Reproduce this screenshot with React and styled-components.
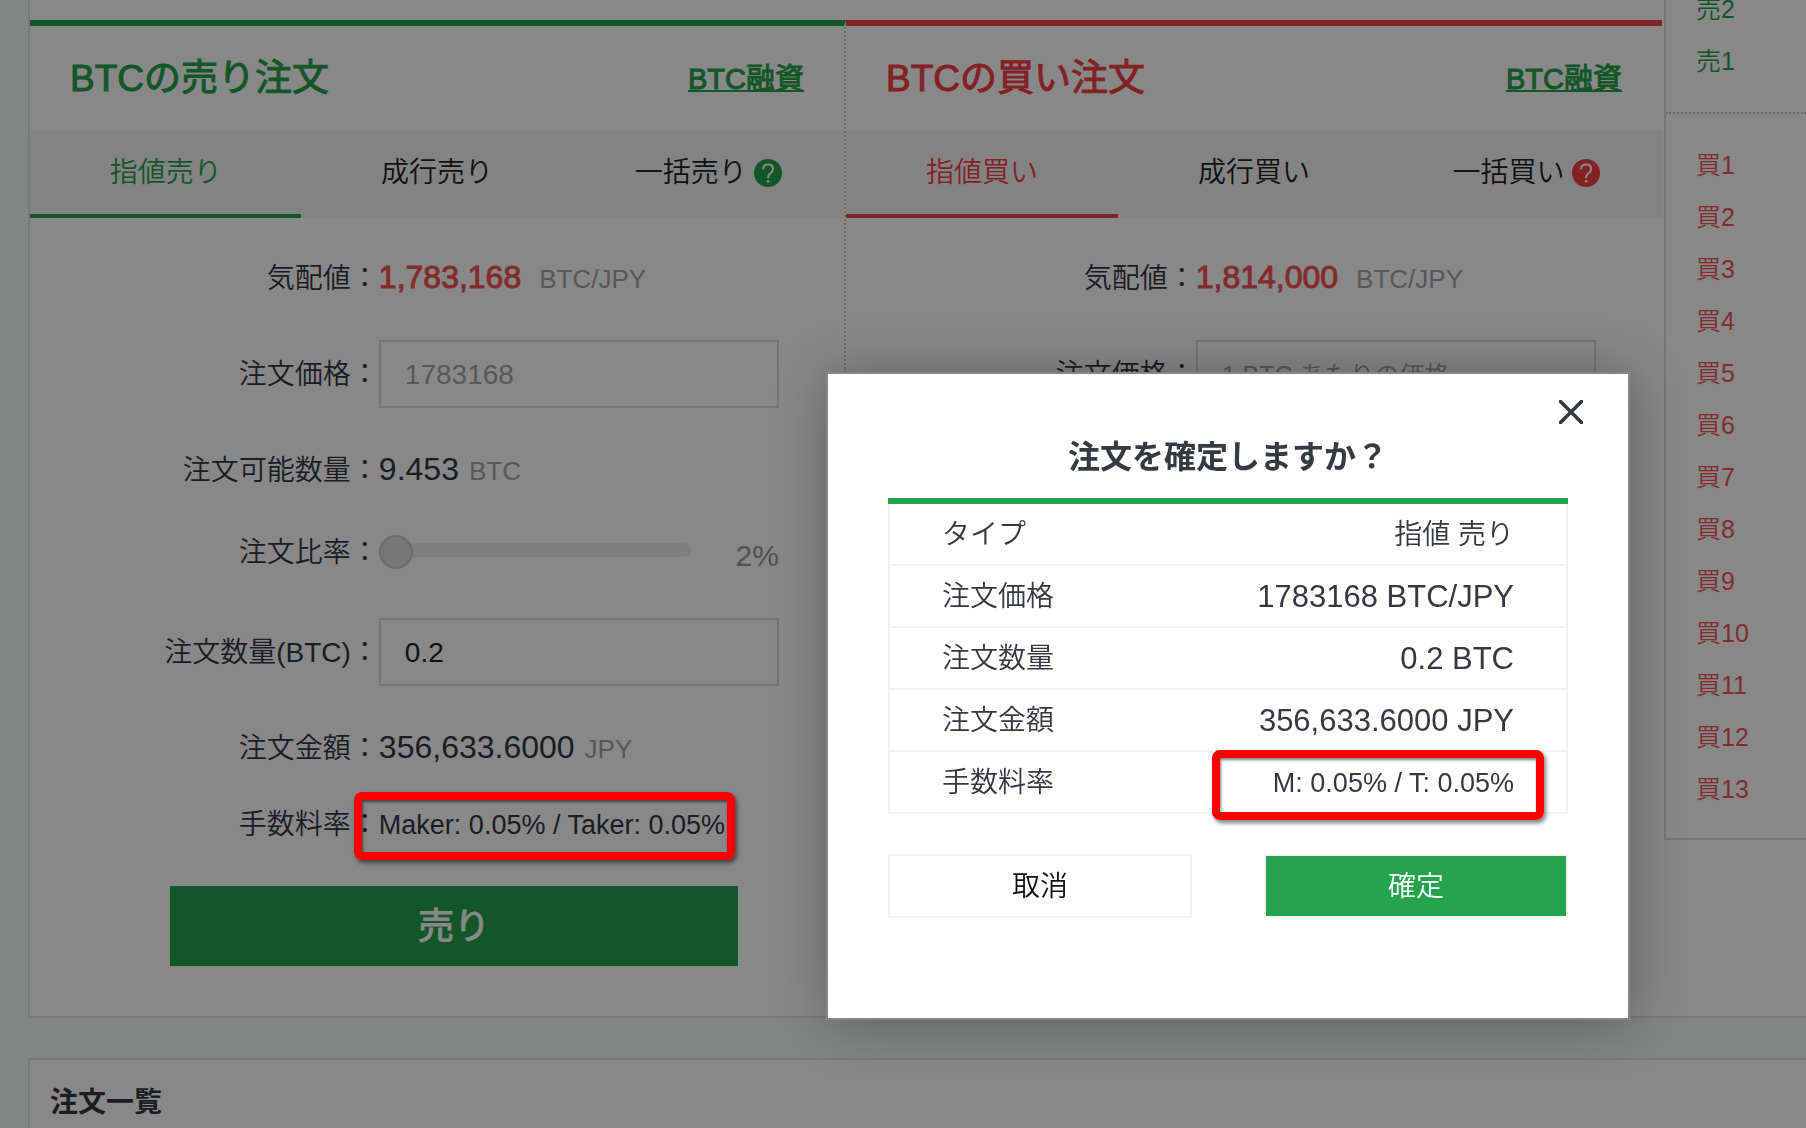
import React from 'react';
import styled, { createGlobalStyle } from 'styled-components';

const GREEN = '#25a44e';
const RED = '#f64047';
const INK = '#363842';
const MUTED = '#a5a5a5';

const GlobalStyle = createGlobalStyle`
  * {
    box-sizing: border-box;
  }

  body {
    margin: 0;
    background: #f4f9f5;
    color: ${INK};
    font-family: 'Liberation Sans', 'Noto Sans CJK JP', sans-serif;
    font-size: 28px;
    font-weight: 350;
    line-height: 42px;
  }

  button,
  input {
    font: inherit;
  }
`;

const Page = styled.div`
  min-height: 100vh;
  padding-left: 28px;
  display: flex;
  flex-direction: column;
  gap: 40px;
`;

const TradeCard = styled.section`
  display: flex;
  align-items: flex-start;
  background: #fff;
  border-left: 2px solid #e1e1e1;
  border-bottom: 2px solid #e1e1e1;
`;

const Panels = styled.div`
  flex: 1;
  display: grid;
  grid-template-columns: 1fr 1fr;
  padding-top: 20px;
  margin-right: 2px;
`;

const Panel = styled.div`
  border-top: 6px solid ${(props) => props.$color};
  border-right: ${(props) => (props.$divided ? '2px dotted #cfcfcf' : 'none')};
  padding-bottom: 50px;
`;

const PanelHeader = styled.header`
  height: 104px;
  padding: 2px 40px 0;
  display: flex;
  align-items: center;
  justify-content: space-between;
`;

const PanelTitle = styled.h2`
  margin: 0;
  font-size: 37px;
  font-weight: normal;
  -webkit-text-stroke: 1px;
  color: ${(props) => props.$color};
`;

const LoanLink = styled.a`
  color: ${GREEN};
  font-size: 29px;
  font-weight: normal;
  -webkit-text-stroke: 1px;
  text-decoration-thickness: 2px;
`;

const Tabs = styled.nav`
  display: grid;
  grid-template-columns: repeat(3, 1fr);
  height: 88px;
  background: #f5f5f5;
`;

const Tab = styled.button`
  display: flex;
  align-items: center;
  justify-content: center;
  gap: 7px;
  padding: 2px 0 0;
  border: 0;
  border-bottom: 4px solid ${(props) => (props.$active ? props.$color : 'transparent')};
  background: none;
  color: ${(props) => (props.$active ? props.$color : '#222')};
`;

const Form = styled.form`
  padding-top: 26px;
`;

const Row = styled.div`
  display: grid;
  grid-template-columns: 3fr 4fr;
  height: 68px;
  margin-bottom: ${(props) => props.$gap ?? 28}px;
`;

const Label = styled.label`
  line-height: 70px;
  text-align: right;
  white-space: nowrap;
`;

const Value = styled.output`
  justify-self: start;
  position: relative;
  height: 68px;
  font-size: ${(props) => (props.$small ? 27 : 32)}px;
  line-height: ${(props) => (props.$small ? 70 : 66)}px;
  white-space: nowrap;
`;

const Price = styled.strong`
  margin-right: 8px;
  color: #f45454;
  font-weight: normal;
  -webkit-text-stroke: 1px;
`;

const Unit = styled.span`
  margin-left: 10px;
  font-size: 26px;
  color: ${MUTED};
`;

const TextInput = styled.input`
  width: 400px;
  height: 68px;
  padding: 2px 24px 0;
  border: 2px solid #dcdcdc;
  background: #fff;
  color: ${(props) => (props.$muted ? MUTED : '#222')};

  &::placeholder {
    color: ${MUTED};
    font-size: 25px;
  }
`;

const SliderCell = styled.div`
  width: 400px;
  display: flex;
  align-items: center;
  justify-content: space-between;
`;

const Slider = styled.input`
  appearance: none;
  width: 312px;
  height: 34px;
  margin: 0 0 6px;
  background: none;

  &::-webkit-slider-runnable-track {
    height: 14px;
    border-radius: 7px;
    background: #efefef;
  }

  &::-webkit-slider-thumb {
    appearance: none;
    width: 34px;
    height: 34px;
    margin-top: -8px;
    border: 2px solid #cacaca;
    border-radius: 50%;
    background: #dfdfdf;
  }
`;

const Percent = styled.output`
  padding-top: 6px;
  font-size: 30px;
  color: #999;
`;

const SubmitButton = styled.button`
  display: block;
  width: calc(100% - 246px);
  height: 80px;
  margin-left: 140px;
  padding: 2px 0 0;
  border: 0;
  background: ${(props) => props.$color};
  color: #fff;
  font-size: 36px;
  font-weight: normal;
  -webkit-text-stroke: 1px;
`;

const OrderBook = styled.aside`
  width: 142px;
  border-left: 2px solid #dcdcdc;
  border-bottom: 2px solid #dcdcdc;
  font-size: 25px;
  line-height: 52px;
`;

const Levels = styled.ul`
  margin: 0;
  padding: 25px 0 23px 30px;
  list-style: none;
  color: ${(props) => props.$color};
`;

// only the tail of the asks is in view, the rest is scrolled off the top
const Asks = styled(Levels)`
  height: 114px;
  padding-bottom: 25px;
  display: flex;
  flex-direction: column;
  justify-content: flex-end;
  overflow: hidden;
  border-bottom: 2px dotted #c4c4c4;
`;

const OrdersCard = styled.section`
  flex: 1;
  padding: 22px 20px 0;
  background: #fff;
  border-top: 2px solid #e1e1e1;
  border-left: 2px solid #e1e1e1;
`;

const OrdersTitle = styled.h3`
  margin: 0;
  font-size: 28px;
`;

const Backdrop = styled.div`
  position: fixed;
  inset: 0;
  z-index: 1;
  background: rgba(0, 0, 0, 0.467);
`;

const Modal = styled.div`
  position: absolute;
  top: 372px;
  right: 176px;
  z-index: 2;
  width: 804px;
  padding: 59px 60px 100px;
  border: 2px solid #868686;
  background: #fff;
  box-shadow: 2px 2px 50px rgba(0, 0, 0, 0.3);
`;

const ModalTitle = styled.h2`
  margin: 0;
  padding-bottom: 17px;
  border-bottom: 6px solid ${GREEN};
  font-size: 32px;
  line-height: 48px;
  text-align: center;
`;

const CloseButton = styled.button`
  position: absolute;
  top: 26px;
  right: 45px;
  width: 24px;
  height: 24px;
  padding: 0;
  border: 0;
  background: none;

  svg {
    display: block;
  }
`;

const Summary = styled.table`
  width: 100%;
  border-spacing: 0;
  border-left: 2px solid #f2f2f2;
  border-right: 2px solid #f2f2f2;

  th,
  td {
    position: relative;
    height: 62px;
    padding: 2px 52px 0;
    border-bottom: 2px solid #f2f2f2;
    font-weight: 350;
    line-height: 58px;
  }

  th {
    text-align: left;
  }
`;

const SummaryValue = styled.td`
  text-align: right;
  font-size: ${(props) => props.$size}px;
`;

const ModalActions = styled.div`
  display: grid;
  grid-template-columns: 1fr 1fr;
  gap: 72px;
  margin-top: 40px;
`;

const ActionButton = styled.button`
  height: 64px;
  padding: 2px 0 0;
  border: 2px solid #f2f2f2;
  background: ${(props) => (props.$primary ? GREEN : '#fff')};
  color: ${(props) => (props.$primary ? '#fff' : '#111')};
`;

const Highlight = styled.span`
  position: absolute;
  z-index: 3;
  border: 8px solid #f00;
  border-radius: 8px;
  box-shadow: 2px 3px 4px rgba(0, 0, 0, 0.5), inset 1px 2px 3px rgba(0, 0, 0, 0.5);
  pointer-events: none;
`;

const FormHighlight = styled(Highlight)`
  inset: 2px -10px -2px -25px;
`;

const ModalHighlight = styled(Highlight)`
  inset: -2px 22px -8px auto;
  width: 332px;
`;

const HelpIcon = ({ color }) => (
  <svg width="28" height="28" viewBox="0 0 28 28" aria-hidden="true">
    <circle cx="14" cy="14" r="14" fill={color} />
    <path
      d="M9 10.4C9 7.4 11.1 5.6 14.1 5.6s5 1.8 5 4.4c0 2.1-1.2 3.2-2.7 4.3-1.6 1.2-2.3 2-2.3 4.1v.6"
      fill="none"
      stroke="#fff"
      strokeWidth="2"
    />
    <circle cx="14.1" cy="22.4" r="1.4" fill="#fff" />
  </svg>
);

const CloseIcon = () => (
  <svg width="24" height="24" viewBox="0 0 24 24" aria-hidden="true">
    <path d="M1.5 1.5l21 21M22.5 1.5l-21 21" stroke={INK} strokeWidth="3.6" strokeLinecap="round" />
  </svg>
);

const PanelTop = ({ title, color, tabs }) => (
  <>
    <PanelHeader>
      <PanelTitle $color={color}>{title}</PanelTitle>
      <LoanLink href="#loan">BTC融資</LoanLink>
    </PanelHeader>
    <Tabs>
      {tabs.map((tab, i) => (
        <Tab key={tab} type="button" $active={i === 0} $color={color}>
          {tab}
          {i === 2 && <HelpIcon color={color} />}
        </Tab>
      ))}
    </Tabs>
  </>
);

const bids = Array.from({ length: 13 }, (_, i) => `買${i + 1}`);

const summary = [
  { name: 'タイプ', value: '指値 売り', size: 28 },
  { name: '注文価格', value: '1783168 BTC/JPY', size: 31 },
  { name: '注文数量', value: '0.2 BTC', size: 31 },
  { name: '注文金額', value: '356,633.6000 JPY', size: 31 },
  { name: '手数料率', value: 'M: 0.05% / T: 0.05%', size: 27, marked: true },
];

const App = () => {
  return (
    <>
      <GlobalStyle />
      <Page>
        <TradeCard>
          <Panels>
            <Panel $color={GREEN} $divided>
              <PanelTop title="BTCの売り注文" color={GREEN} tabs={['指値売り', '成行売り', '一括売り']} />
              <Form>
                <Row>
                  <Label htmlFor="sell-quote">気配値：</Label>
                  <Value id="sell-quote">
                    <Price>1,783,168</Price>
                    <Unit>BTC/JPY</Unit>
                  </Value>
                </Row>
                <Row>
                  <Label htmlFor="sell-price">注文価格：</Label>
                  <TextInput id="sell-price" defaultValue="1783168" $muted />
                </Row>
                <Row $gap={14}>
                  <Label htmlFor="sell-available">注文可能数量：</Label>
                  <Value id="sell-available">
                    9.453
                    <Unit>BTC</Unit>
                  </Value>
                </Row>
                <Row $gap={32}>
                  <Label htmlFor="sell-ratio">注文比率：</Label>
                  <SliderCell>
                    <Slider id="sell-ratio" type="range" min="0" max="100" defaultValue="0" />
                    <Percent htmlFor="sell-ratio">2%</Percent>
                  </SliderCell>
                </Row>
                <Row>
                  <Label htmlFor="sell-amount">注文数量(BTC)：</Label>
                  <TextInput id="sell-amount" defaultValue="0.2" />
                </Row>
                <Row $gap={8}>
                  <Label htmlFor="sell-total">注文金額：</Label>
                  <Value id="sell-total">
                    356,633.6000
                    <Unit>JPY</Unit>
                  </Value>
                </Row>
                <Row>
                  <Label htmlFor="sell-fee">手数料率：</Label>
                  <Value id="sell-fee" $small>
                    Maker: 0.05% / Taker: 0.05%
                    <FormHighlight />
                  </Value>
                </Row>
                <SubmitButton type="button" $color={GREEN}>
                  売り
                </SubmitButton>
              </Form>
            </Panel>
            <Panel $color={RED}>
              <PanelTop title="BTCの買い注文" color={RED} tabs={['指値買い', '成行買い', '一括買い']} />
              <Form>
                <Row>
                  <Label htmlFor="buy-quote">気配値：</Label>
                  <Value id="buy-quote">
                    <Price>1,814,000</Price>
                    <Unit>BTC/JPY</Unit>
                  </Value>
                </Row>
                <Row>
                  <Label htmlFor="buy-price">注文価格：</Label>
                  <TextInput id="buy-price" placeholder="1 BTC あたりの価格" />
                </Row>
              </Form>
            </Panel>
          </Panels>
          <OrderBook>
            <Asks $color={GREEN}>
              <li>売2</li>
              <li>売1</li>
            </Asks>
            <Levels $color="#f45454">
              {bids.map((level) => (
                <li key={level}>{level}</li>
              ))}
            </Levels>
          </OrderBook>
        </TradeCard>
        <OrdersCard>
          <OrdersTitle>注文一覧</OrdersTitle>
        </OrdersCard>
      </Page>

      <Backdrop />
      <Modal role="dialog" aria-labelledby="confirm-title">
        <CloseButton type="button" aria-label="閉じる">
          <CloseIcon />
        </CloseButton>
        <ModalTitle id="confirm-title">注文を確定しますか？</ModalTitle>
        <Summary>
          <tbody>
            {summary.map((item) => (
              <tr key={item.name}>
                <th scope="row">{item.name}</th>
                <SummaryValue $size={item.size}>
                  {item.value}
                  {item.marked && <ModalHighlight />}
                </SummaryValue>
              </tr>
            ))}
          </tbody>
        </Summary>
        <ModalActions>
          <ActionButton type="button">取消</ActionButton>
          <ActionButton type="button" $primary>
            確定
          </ActionButton>
        </ModalActions>
      </Modal>
    </>
  );
};

export default App;
